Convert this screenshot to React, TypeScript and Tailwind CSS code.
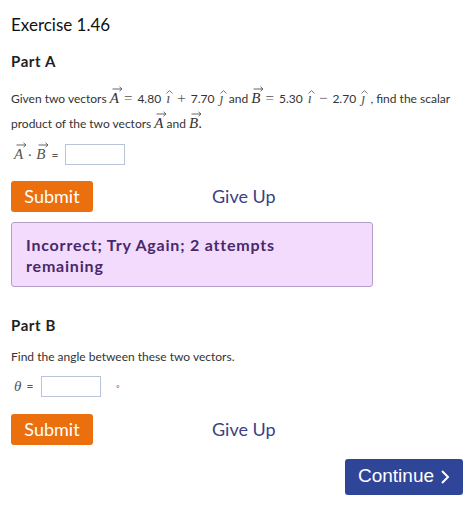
import React from "react";

const serif = "font-['Liberation_Serif','DejaVu_Serif',serif]";

// vector letter with a small arrow over it
const Vec = ({ children }: { children: string }) => (
  <span className="relative inline-block leading-none">
    <span className={`${serif} italic text-[15px]`}>{children}</span>
    <svg
      className="absolute left-[2px] top-[-5px]"
      width="11"
      height="6"
      viewBox="0 0 11 6"
    >
      <path d="M0.5 3H10M7.5 0.8L10 3L7.5 5.2" stroke="#555" strokeWidth="0.9" fill="none" />
    </svg>
  </span>
);

// unit vector with hat
const Unit = ({ children }: { children: string }) => (
  <span className="relative inline-block px-[2px] leading-none">
    <span className={`${serif} italic text-[15px] text-[#555]`}>{children}</span>
    <svg className="absolute left-[2px] top-[-1px]" width="7" height="4" viewBox="0 0 7 4">
      <path d="M0.5 3.5L3.5 0.6L6.5 3.5" stroke="#555" strokeWidth="0.8" fill="none" />
    </svg>
  </span>
);

const Op = ({ children }: { children: string }) => (
  <span className={`${serif} text-[15px] mx-[5px] text-[#555]`}>{children}</span>
);

const ActionRow = () => (
  <div className="flex items-center">
    <button className="w-[82px] h-[31px] rounded-[3px] bg-[#eb6f0c] text-white text-[18px] font-['Lato',sans-serif]">
      Submit
    </button>
    <span className="ml-[119px] text-[18px] text-[#3b3f85] font-['Lato',sans-serif]">Give Up</span>
  </div>
);

const AnswerBox = ({ w }: { w: string }) => (
  <div className={`${w} h-[21px] border border-[#b8c4d8] bg-white`} />
);

export default function App() {
  return (
    <div className="w-[474px] h-[524px] bg-white px-[11px] font-['Lato',sans-serif] text-[#2c2c2c]">
      <h1 className="pt-[13px] text-[17px] leading-[24px] text-[#111]">Exercise 1.46</h1>

      <h2 className="mt-[14px] text-[15px] font-bold leading-[20px] tracking-[0.6px] text-[#222]">Part A</h2>

      <p className="mt-[15px] text-[12px] leading-[24px] text-[#333]">
        Given two vectors <Vec>A</Vec>
        <Op>=</Op>4.80 <Unit>ı</Unit>
        <Op>+</Op>7.70 <Unit>ȷ</Unit> and <Vec>B</Vec>
        <Op>=</Op>5.30 <Unit>ı</Unit>
        <Op>−</Op>2.70 <Unit>ȷ</Unit> , find the scalar
        <br />
        product of the two vectors <Vec>A</Vec> and <Vec>B</Vec>
        <span className={`${serif} text-[15px]`}>.</span>
      </p>

      <div className="mt-[8px] flex items-center gap-[7px] text-[12px]">
        <span className="ml-[3px] flex items-center text-[#555]">
          <Vec>A</Vec>
          <span className="mx-[5px]">·</span>
          <Vec>B</Vec>
          <span className="ml-[6px]">=</span>
        </span>
        <AnswerBox w="w-[60px]" />
      </div>

      <div className="mt-[16px]">
        <ActionRow />
      </div>

      <div className="mt-[10px] w-[362px] h-[65px] rounded-[3px] border border-[#b59fc9] bg-[#f3dbfd] px-[14px] pt-[11px]">
        <p className="text-[16px] font-bold leading-[21px] tracking-[0.8px] text-[#47296b]">
          Incorrect; Try Again; 2 attempts
          <br />
          remaining
        </p>
      </div>

      <h2 className="mt-[28px] text-[15px] font-bold leading-[20px] tracking-[0.6px] text-[#222]">Part B</h2>

      <p className="mt-[14px] text-[12px] leading-[16px] text-[#333]">Find the angle between these two vectors.</p>

      <div className="mt-[10px] flex items-center text-[12px] text-[#555]">
        <span className={`ml-[3px] ${serif} italic text-[15px]`}>θ</span>
        <span className="ml-[5px]">=</span>
        <span className="ml-[8px]">
          <AnswerBox w="w-[60px]" />
        </span>
        <span className="ml-[14px] text-[9px] text-[#999]">∘</span>
      </div>

      <div className="mt-[16px]">
        <ActionRow />
      </div>

      <div className="mt-[14px] flex justify-end">
        <button className="flex h-[36px] w-[118px] items-center justify-center gap-[6px] rounded-[3px] bg-[#2f4598] text-[19px] text-white font-['Liberation_Sans',sans-serif]">
          Continue
          <svg width="10" height="16" viewBox="0 0 10 16">
            <path d="M2 2L8 8L2 14" stroke="white" strokeWidth="2" fill="none" />
          </svg>
        </button>
      </div>
    </div>
  );
}
